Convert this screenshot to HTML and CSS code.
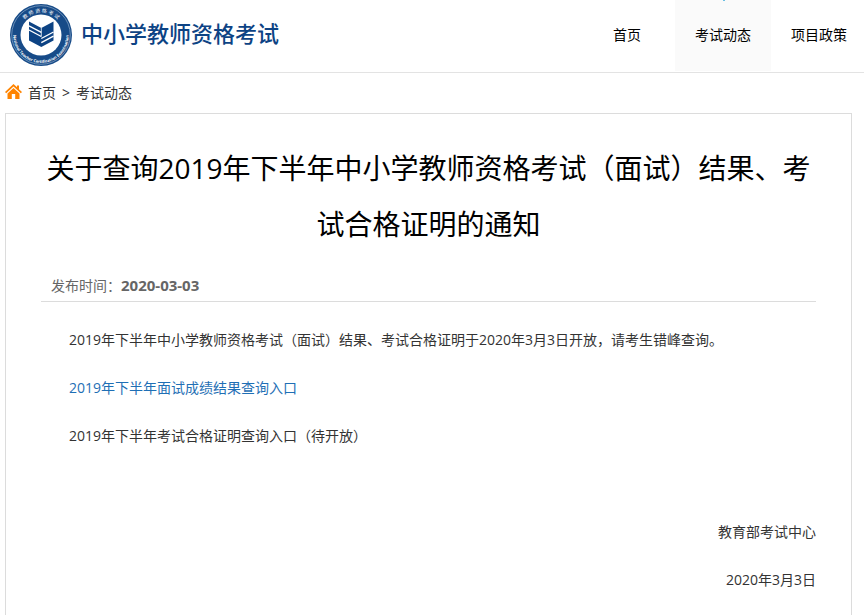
FILE: index.html
```html
<!DOCTYPE html>
<html lang="zh-CN">
<head>
    <meta charset="UTF-8">
    <meta name="viewport" content="width=device-width, initial-scale=1.0">
    <title>中小学教师资格考试</title>
    <link rel="stylesheet" href="styles.css">
</head>
<body>
    <!-- 顶部 -->
    <header class="header">
        <a class="logo" href="#">
            <svg class="logo-img" viewBox="0 0 62 62" aria-hidden="true">
                <defs>
                    <path id="arcTop" d="M8.500 31a22.500 22.500 0 0 1 45 0"/>
                    <path id="arcBottom" d="M3.800 26a27.700 27.700 0 1 0 54.400 0"/>
                </defs>
                <circle cx="31" cy="31" r="31" fill="#174b88"/>
                <circle cx="31" cy="31" r="29.300" fill="none" stroke="#8ba9c9" stroke-width="0.700"/>
                <circle cx="31" cy="31" r="20.500" fill="#fff"/>
                <text class="ring-cn"><textPath href="#arcTop" startOffset="50%">教 师 资 格 考 试</textPath></text>
                <text class="ring-en"><textPath href="#arcBottom" startOffset="50%">National Teacher Certification Examination</textPath></text>
                <path d="M19 17.500l12.300 6.500 12.200-6.500v19l-12.200 6.500L19 36.500z" fill="#0d4384"/>
                <path d="M19 21.800l12.300 6.500M19 26l12.300 6.500M31.300 34.500l12.200-6.500M31.300 38.700l12.200-6.500" stroke="#fff" stroke-width="1.400"/>
                <path d="M31.300 24v8.500" stroke="#fff" stroke-width="0.800"/>
            </svg>
            <span class="logo-text">中小学教师资格考试</span>
        </a>
        <nav>
            <ul class="nav">
                <li><a href="#">首页</a></li>
                <li class="active"><a href="#">考试动态</a></li>
                <li><a href="#">项目政策</a></li>
            </ul>
        </nav>
    </header>

    <!-- 当前位置 -->
    <div class="crumb">
        <svg class="home" viewBox="0 0 17 16" aria-hidden="true">
            <path d="M8.500 0L0 8l1.200 1.300 7.300-6.800 7.300 6.800L17 8l-3-2.800V1.500h-2v1.800z" fill="#ff8400"/>
            <path d="M8.500 4L2.500 9.600V15h4.300v-5h3.400v5h4.300V9.600z" fill="#ff8400"/>
        </svg>
        <a href="#">首页</a>
        <span>&gt;</span>
        <a href="#">考试动态</a>
    </div>

    <!-- 正文 -->
    <main class="content">
        <h1>关于查询2019年下半年中小学教师资格考试（面试）结果、考试合格证明的通知</h1>
        <div class="meta">发布时间：<b>2020-03-03</b></div>
        <div class="article">
            <p>2019年下半年中小学教师资格考试（面试）结果、考试合格证明于2020年3月3日开放，请考生错峰查询。</p>
            <p><a href="#">2019年下半年面试成绩结果查询入口</a></p>
            <p>2019年下半年考试合格证明查询入口（待开放）</p>
            <p>&nbsp;</p>
            <p class="right">教育部考试中心</p>
            <p class="right">2020年3月3日</p>
        </div>
    </main>
</body>
</html>
```
FILE: styles.css
```css
* {
    box-sizing: border-box;
}
body {
    margin: 0;
    font-family: "Open Sans", "Noto Sans CJK SC", sans-serif;
    font-size: 14px;
    color: #333;
    background-color: #fff;
}
a {
    color: inherit;
    text-decoration: none;
}

/* 顶部 */
.header {
    display: flex;
    justify-content: space-between;
    height: 73px;
    border-bottom: 1px solid #e3e3e3;
    overflow: hidden;
}
.logo {
    display: flex;
    align-items: center;
    gap: 9px;
    padding: 0 0 3px 10px;
    color: #0d4384;
}
.logo-img {
    width: 62px;
    height: 62px;
}
.logo-text {
    padding-bottom: 4px;
    font-size: 22px;
    line-height: 32px;
    font-weight: 500;
    white-space: nowrap;
}
.ring-cn,
.ring-en {
    fill: #fff;
    text-anchor: middle;
}
.ring-cn {
    font-size: 5px;
}
.ring-en {
    font-size: 4px;
    font-weight: bold;
}
.nav {
    display: flex;
    margin: 0 -3px 0 0;
    padding: 0;
    list-style: none;
}
.nav li {
    position: relative;
    width: 96px;
    height: 71px;
    line-height: 70px;
    text-align: center;
    color: #000;
}
.nav a {
    display: block;
}
.nav .active {
    background-color: #fafafa;
}
.nav .active::before {
    content: "";
    position: absolute;
    top: 0;
    left: 50%;
    width: 2px;
    height: 1px;
    background-color: #6bbfe3;
}

/* 当前位置 */
.crumb {
    display: flex;
    align-items: center;
    gap: 6px;
    height: 40px;
    padding: 0 0 2px 5px;
}
.home {
    width: 17px;
    height: 16px;
}

/* 正文 */
.content {
    margin: 0 12px 0 5px;
    padding: 26px 35px 40px;
    border: 1px solid #dcdcdc;
}
h1 {
    margin: 0;
    font-size: 28px;
    line-height: 56px;
    font-weight: normal;
    text-align: center;
    color: #000;
}
.meta {
    margin-top: 18px;
    padding-left: 10px;
    line-height: 31px;
    border-bottom: 1px solid #dcdcdc;
    color: #666;
}
.meta b {
    font-size: 15px;
}
.article {
    margin-top: 14px;
    line-height: 48px;
}
.article p {
    margin: 0;
    text-indent: 28px;
}
.article .right {
    text-align: right;
}
.article a {
    color: #1f6fb5;
}
```
